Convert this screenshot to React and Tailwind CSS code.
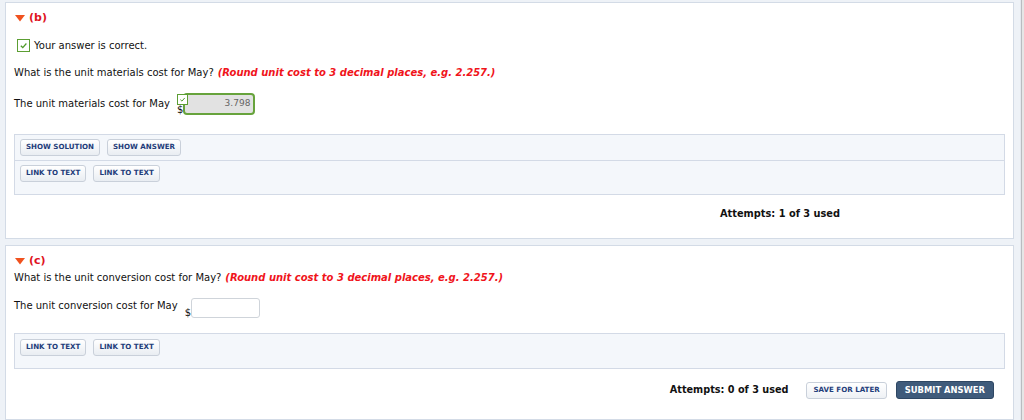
import React from "react";

const font = { fontFamily: '"DejaVu Sans", Verdana, sans-serif' };

function Tri() {
  return (
    <svg width="10" height="7" viewBox="0 0 10 7" className="mr-[4px]">
      <polygon points="0,0 10,0 5,6.5" fill="#f0521f" />
    </svg>
  );
}

function Check({ size = 12 }) {
  return (
    <span
      className="inline-flex items-center justify-center border border-[#5c9e33] bg-white"
      style={{ width: size, height: size }}
    >
      <svg width={size - 4} height={size - 4} viewBox="0 0 10 10">
        <polyline points="2,5.2 4.2,7.3 8.2,2.8" fill="none" stroke="#4f9a2a" strokeWidth="1.4" />
      </svg>
    </span>
  );
}

function Btn({ children }) {
  return (
    <span className="inline-flex items-center h-[17px] px-[5px] rounded-[3px] border border-[#c9d0da] bg-gradient-to-b from-white to-[#e9edf2] text-[7.1px] font-bold text-[#1f3d7a] whitespace-nowrap">
      {children}
    </span>
  );
}

export default function App() {
  return (
    <div className="w-[1024px] h-[420px] bg-[#eef2f7] overflow-hidden flex text-[#111]" style={font}>
      <div className="w-[1020px] pl-[5px] pt-[2px]">
        {/* Panel b */}
        <div className="w-[1009px] h-[237px] border border-[#d3dbe6] bg-white px-[8px]">
          <div className="mt-[7px] h-[16px] flex items-center pl-[1px]">
            <Tri />
            <span className="text-[11px] font-bold text-[#e0141e]">(b)</span>
          </div>
          <div className="mt-[11px] h-[16px] flex items-center pl-[3px]">
            <Check size={13} />
            <span className="ml-[4px] text-[10px]">Your answer is correct.</span>
          </div>
          <div className="mt-[11px] h-[16px] flex items-center text-[10px] whitespace-nowrap">
            <span>What is the unit materials cost for May?</span>
            <span className="ml-[4px] font-bold italic text-[#f0141b]">(Round unit cost to 3 decimal places, e.g. 2.257.)</span>
          </div>
          <div className="mt-[4px] flex items-start">
            <span className="mt-[12px] h-[16px] leading-[16px] text-[10px] whitespace-nowrap">The unit materials cost for May</span>
            <div className="relative ml-[7px] pt-[9px] flex items-end">
              <span className="absolute top-[2px] left-0">
                <Check size={11} />
              </span>
              <span className="text-[10px] leading-[12px] mb-[-1px]">$</span>
              <div className="w-[72px] h-[22px] rounded-[4px] border-2 border-[#67a33c] bg-[#e2e2e2] flex items-center justify-end pr-[3px] text-[9px] text-[#666]">
                3.798
              </div>
            </div>
          </div>
          <div className="mt-[19px] border border-[#d3dae6] bg-[#f4f7fb]">
            <div className="pt-[4px] pb-[4px] pl-[5px] flex gap-[7px] border-b border-[#d3dae6]">
              <Btn>SHOW SOLUTION</Btn>
              <Btn>SHOW ANSWER</Btn>
            </div>
            <div className="pt-[4px] pb-[12px] pl-[5px] flex gap-[7px]">
              <Btn>LINK TO TEXT</Btn>
              <Btn>LINK TO TEXT</Btn>
            </div>
          </div>
          <div className="mt-[11px] h-[16px] flex justify-end items-center pr-[165px]">
            <span className="text-[9.8px] font-bold">Attempts: 1 of 3 used</span>
          </div>
        </div>

        {/* Panel c */}
        <div className="mt-[6px] w-[1009px] h-[175px] border border-[#d3dbe6] bg-white px-[8px]">
          <div className="mt-[7px] h-[16px] flex items-center pl-[1px]">
            <Tri />
            <span className="text-[11px] font-bold text-[#e0141e]">(c)</span>
          </div>
          <div className="h-[16px] flex items-center text-[10px] whitespace-nowrap">
            <span>What is the unit conversion cost for May?</span>
            <span className="ml-[4px] font-bold italic text-[#f0141b]">(Round unit cost to 3 decimal places, e.g. 2.257.)</span>
          </div>
          <div className="mt-[13px] flex items-start">
            <span className="h-[16px] leading-[16px] text-[10px] whitespace-nowrap">The unit conversion cost for May</span>
            <div className="ml-[7px] flex items-end">
              <span className="text-[10px] leading-[12px] mb-[-1px]">$</span>
              <div className="w-[69px] h-[20px] rounded-[3px] border border-[#cfd4da] bg-white" />
            </div>
          </div>
          <div className="mt-[15px] border border-[#d3dae6] bg-[#f4f7fb] pt-[5px] pb-[12px] pl-[5px] flex gap-[7px]">
            <Btn>LINK TO TEXT</Btn>
            <Btn>LINK TO TEXT</Btn>
          </div>
          <div className="mt-[12px] flex justify-end items-center pr-[11px]">
            <span className="text-[9.7px] font-bold">Attempts: 0 of 3 used</span>
            <span className="ml-[18px] inline-flex items-center h-[17px] px-[6px] rounded-[3px] border border-[#c9d0da] bg-gradient-to-b from-white to-[#eef1f5] text-[7.1px] font-bold text-[#1f3d7a] whitespace-nowrap">
              SAVE FOR LATER
            </span>
            <span className="ml-[9px] inline-flex items-center h-[18px] px-[8px] rounded-[3px] border border-[#2e4763] bg-[#3f5b7b] text-[8.4px] font-bold text-white whitespace-nowrap">
              SUBMIT ANSWER
            </span>
          </div>
        </div>
      </div>
      <div className="w-[4px] h-full flex">
        <div className="w-[1px] bg-[#e4e8ee]" />
        <div className="w-[1px] bg-[#b9bcc0]" />
        <div className="flex-1 bg-[#e6e6e6]" />
      </div>
    </div>
  );
}
